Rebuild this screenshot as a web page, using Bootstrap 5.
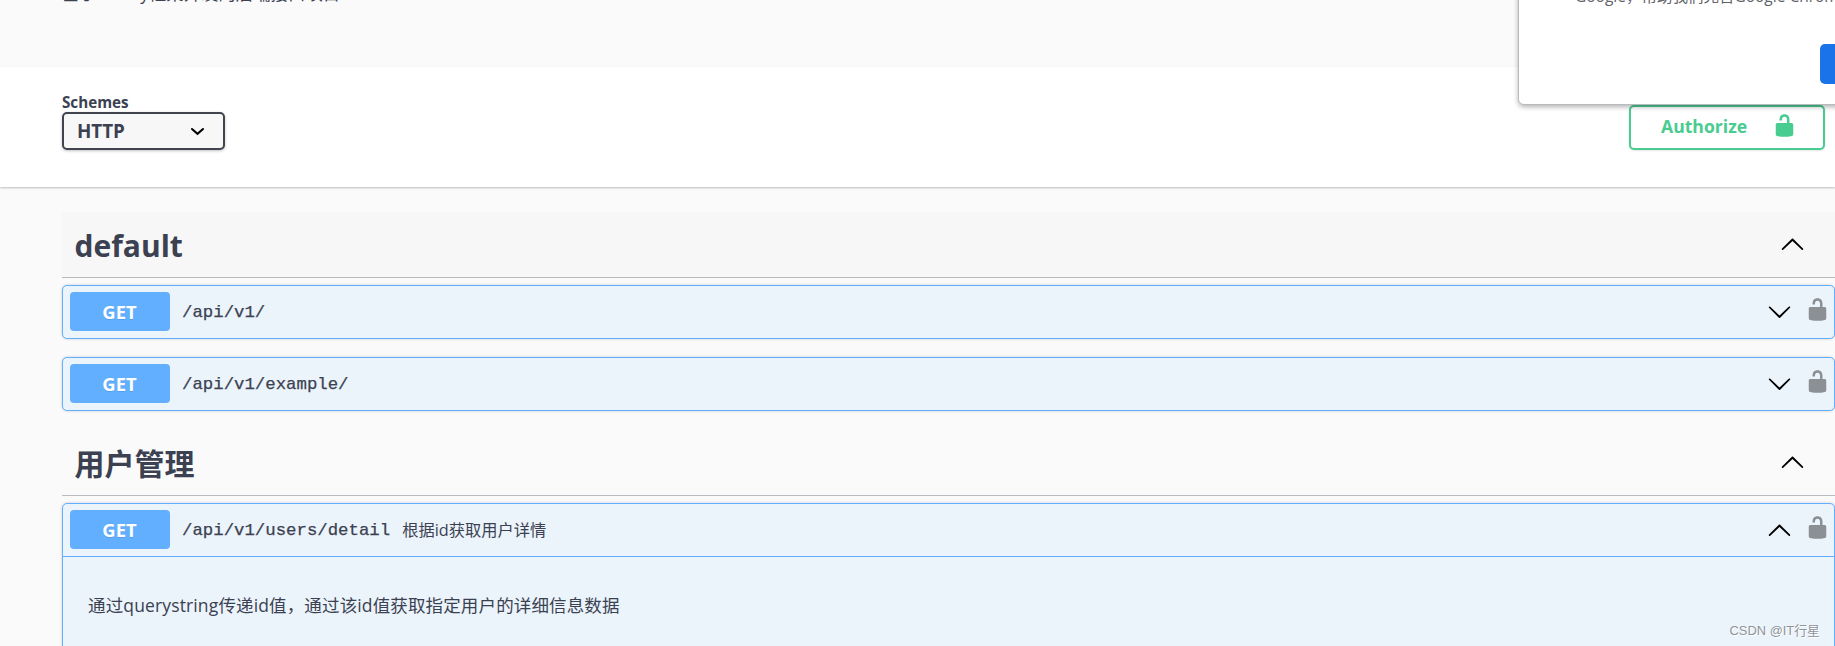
<!DOCTYPE html>
<html lang="zh-CN">
<head>
<meta charset="utf-8">
<meta name="viewport" content="width=device-width, initial-scale=1">
<title>Swagger UI</title>
<link rel="stylesheet" href="https://cdn.jsdelivr.net/npm/bootstrap@5.3.0/dist/css/bootstrap.min.css">
<style>
body{height:646px;background:#fafafa;color:#3b4151;font-family:"Open Sans","Noto Sans CJK SC",sans-serif;line-height:1.2}
.intro{height:67px;padding-left:62px}
.intro p{font-size:17.4px;line-height:24px;margin-top:-19px}
.scheme-bar{height:120px;padding:25px 10px 0 62px;box-shadow:0 1px 2px rgba(0,0,0,.25)}
.scheme-label{font-size:15.2px;line-height:20px;font-weight:700}
.scheme-select{width:163px;height:38px;padding:0 18px 0 13px;border:2px solid #41444e;border-radius:5px;background:#f7f7f7;box-shadow:0 1px 3px rgba(0,0,0,.25);font-size:18.8px;font-weight:700}
.auth-btn{width:196px;height:45px;margin-top:13px;padding:0 26px 3px 30px;border:2px solid #49cc90;border-radius:5px;color:#49cc90;font-size:17.6px;font-weight:700;box-shadow:0 1px 2px rgba(0,0,0,.1)}
.auth-btn span{padding-top:2px}
.auth-btn .ico{margin-top:-1px}
.ico{width:25px;height:25px;flex:none;display:block}
.lock{color:#8b9094;margin:-6px 0 0 13px}
.tags{height:459px;padding:25px 0 0 62px}
.tag-head{height:66px;padding:0 30px 0 13px;border-bottom:1px solid rgba(59,65,81,.33);font-size:30px;font-weight:700;margin-bottom:7px}
.tag-head span{padding-top:2px;margin-left:-.5px}
.tag-head .ico{margin-top:-2px}
.tag-head.hovered{background:#f7f7f7}
.op{border:1px solid #61affe;border-radius:5px;background:#ebf3fb;box-shadow:0 0 3px rgba(0,0,0,.19);margin-bottom:18px}
.op + .tag-head{margin-top:19px}
.op-row{height:52px;padding:0 4px 0 7px}
.arrow{margin-top:-2px}
.verb{width:100px;height:39px;margin-bottom:1px;padding:2px 1px 0 0;border-radius:4px;background:#61affe;font-size:18.4px;font-weight:700;text-shadow:0 1px 0 rgba(0,0,0,.1)}
.route{font-family:"Liberation Mono",monospace;font-size:17.35px;-webkit-text-stroke:.25px #3b4151;margin-left:12px;padding-top:2px}
.summary{font-size:16.25px;margin-left:12px;padding-top:2px}
.op-text{border-top:1px solid #61affe;height:110px;padding:35px 25px;font-size:17.5px;line-height:26px;letter-spacing:.14px}
.prompt{left:1518px;top:-39px;width:340px;height:144px;border-radius:6px;border:1px solid #b8bbbd;background:#fff;box-shadow:0 2px 5px rgba(0,0,0,.3);color:#5f6368;font-size:15.5px}
.prompt p{padding:24px 0 0 56px;line-height:20px;margin-bottom:38px;white-space:nowrap}
.prompt-ok{width:80px;height:40px;margin-left:301px;border-radius:5px;background:#1a73e8}
.watermark{right:15px;bottom:5px;font:12.9px/20px "Liberation Sans","Noto Sans CJK SC",sans-serif;color:#8f9499;text-shadow:1px 1px 0 #fff}
</style>
<script src="https://cdn.jsdelivr.net/npm/bootstrap@5.3.0/dist/js/bootstrap.bundle.min.js"></script>
</head>
<body class="overflow-hidden position-relative">
<svg class="d-none">
  <symbol id="lock" viewBox="0 0 20 20"><path fill="currentColor" d="M15.8 8H14V5.6C14 2.703 12.665 1 10 1 7.334 1 6 2.703 6 5.6V6h2v-.801C8 3.754 8.797 3 10 3c1.203 0 2 .754 2 2.199V8H4c-.553 0-1 .646-1 1.199V17c0 .549.428 1.139.951 1.307l1.197.387C5.672 18.861 6.55 19 7.1 19h5.8c.549 0 1.428-.139 1.951-.307l1.196-.387c.524-.167.953-.757.953-1.306V9.199C17 8.646 16.352 8 15.8 8z"/></symbol>
  <symbol id="up" viewBox="0 0 20 20"><path d="M17.418 14.908c.272.268.709.268.979 0s.271-.701 0-.969l-7.908-7.83c-.271-.268-.707-.268-.979 0l-7.908 7.83c-.27.268-.271.701 0 .969s.709.268.979 0L10 8z" fill="#000"/></symbol>
  <symbol id="down" viewBox="0 0 20 20"><path d="M17.418 6.109c.272-.268.709-.268.979 0s.271.701 0 .969l-7.908 7.83c-.271.268-.707.268-.979 0l-7.908-7.83c-.27-.268-.271-.701 0-.969s.709-.268.979 0L10 13.25z" fill="#000"/></symbol>
</svg>

<header class="intro d-flex align-items-start"><p class="mb-0">基于Fastify框架开发的后端接口项目</p></header>

<section class="scheme-bar bg-white d-flex justify-content-between align-items-start">
  <div>
    <div class="scheme-label">Schemes</div>
    <div class="scheme-select d-flex align-items-center justify-content-between">
      <span>HTTP</span>
      <svg width="15" height="9" viewBox="0 0 15 9"><path d="M2 2l5.5 4.8L13 2" fill="none" stroke="#000" stroke-width="2.1" stroke-linecap="round"/></svg>
    </div>
  </div>
  <div class="auth-btn d-flex align-items-center justify-content-between bg-white"><span>Authorize</span><svg class="ico"><use href="#lock"/></svg></div>
</section>

<main class="tags overflow-hidden">
  <div class="tag-head hovered d-flex align-items-center justify-content-between"><span>default</span><svg class="ico"><use href="#up"/></svg></div>
  <div class="op"><div class="op-row d-flex align-items-center">
    <span class="verb text-white d-flex align-items-center justify-content-center">GET</span><span class="route">/api/v1/</span>
    <svg class="ico arrow ms-auto"><use href="#down"/></svg><svg class="ico lock"><use href="#lock"/></svg>
  </div></div>
  <div class="op"><div class="op-row d-flex align-items-center">
    <span class="verb text-white d-flex align-items-center justify-content-center">GET</span><span class="route">/api/v1/example/</span>
    <svg class="ico arrow ms-auto"><use href="#down"/></svg><svg class="ico lock"><use href="#lock"/></svg>
  </div></div>
  <div class="tag-head d-flex align-items-center justify-content-between"><span>用户管理</span><svg class="ico"><use href="#up"/></svg></div>
  <div class="op"><div class="op-row d-flex align-items-center">
    <span class="verb text-white d-flex align-items-center justify-content-center">GET</span><span class="route">/api/v1/users/detail</span><span class="summary">根据id获取用户详情</span>
    <svg class="ico arrow ms-auto"><use href="#up"/></svg><svg class="ico lock"><use href="#lock"/></svg>
  </div>
  <div class="op-text">通过querystring传递id值，通过该id值获取指定用户的详细信息数据</div></div>
</main>

<aside class="prompt position-absolute"><p>Google，帮助我们完善Google Chrome</p><div class="prompt-ok"></div></aside>
<div class="watermark position-absolute">CSDN @IT行星</div>
</body>
</html>
